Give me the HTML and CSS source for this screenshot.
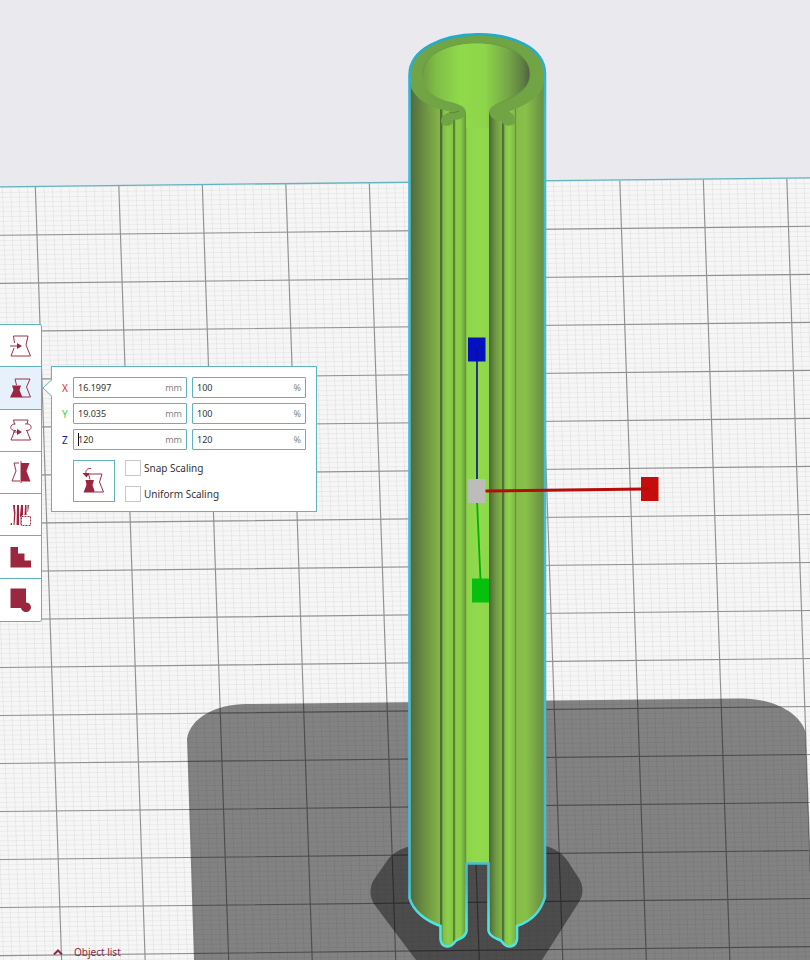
FILE: index.html
```html
<!DOCTYPE html>
<html lang="en">
<head>
<meta charset="utf-8">
<title>Scale model</title>
<link rel="stylesheet" href="styles.css">
</head>
<body>
<main class="workspace">
  <svg class="scene" viewBox="0 0 810 960" preserveAspectRatio="xMidYMid slice" aria-hidden="true">
    <defs>
      <pattern id="minor" width="8.35" height="4.8" patternUnits="userSpaceOnUse" patternTransform="matrix(1 -0.0111 0.034 1 35.3 186.9)">
        <path d="M0 0H8.35M0 0V4.8" stroke="#dedede" stroke-width="1.1" fill="none"/>
      </pattern>
      <linearGradient id="body" gradientUnits="userSpaceOnUse" x1="409" y1="0" x2="545" y2="0">
        <stop offset="0.015" stop-color="#536b3b"/>
        <stop offset="0.06" stop-color="#5f7c40"/>
        <stop offset="0.16" stop-color="#76a043"/>
        <stop offset="0.226" stop-color="#83b548"/>
        <stop offset="0.23" stop-color="#4c7131"/>
        <stop offset="0.24" stop-color="#4c7131"/>
        <stop offset="0.25" stop-color="#80bd46"/>
        <stop offset="0.285" stop-color="#8dcf4b"/>
        <stop offset="0.322" stop-color="#86c648"/>
        <stop offset="0.326" stop-color="#568331"/>
        <stop offset="0.334" stop-color="#568331"/>
        <stop offset="0.344" stop-color="#8ccf4b"/>
        <stop offset="0.38" stop-color="#8acb4a"/>
        <stop offset="0.408" stop-color="#70a53f"/>
        <stop offset="0.418" stop-color="#5f9138"/>
        <stop offset="0.424" stop-color="#8dd54a"/>
        <stop offset="0.5" stop-color="#90da4b"/>
        <stop offset="0.586" stop-color="#8ed74b"/>
        <stop offset="0.59" stop-color="#4d6838"/>
        <stop offset="0.64" stop-color="#6f9b42"/>
        <stop offset="0.68" stop-color="#80b346"/>
        <stop offset="0.684" stop-color="#4b6b35"/>
        <stop offset="0.694" stop-color="#4f7235"/>
        <stop offset="0.706" stop-color="#83c348"/>
        <stop offset="0.74" stop-color="#90d34d"/>
        <stop offset="0.776" stop-color="#7eb946"/>
        <stop offset="0.782" stop-color="#63903a"/>
        <stop offset="0.792" stop-color="#86bd49"/>
        <stop offset="0.86" stop-color="#88c049"/>
        <stop offset="0.95" stop-color="#729c43"/>
        <stop offset="1" stop-color="#638f49"/>
      </linearGradient>
      <linearGradient id="bore" gradientUnits="userSpaceOnUse" x1="422" y1="0" x2="530" y2="0">
        <stop offset="0" stop-color="#6f9d43"/>
        <stop offset="0.12" stop-color="#7fbb47"/>
        <stop offset="0.35" stop-color="#8fda4a"/>
        <stop offset="0.58" stop-color="#8dd54a"/>
        <stop offset="0.8" stop-color="#75a646"/>
        <stop offset="0.93" stop-color="#5f8042"/>
        <stop offset="1" stop-color="#505e41"/>
      </linearGradient>
      <linearGradient id="edge" gradientUnits="userSpaceOnUse" x1="0" y1="35" x2="0" y2="947">
        <stop offset="0" stop-color="#22a9cb"/>
        <stop offset="0.1" stop-color="#48bad0"/>
        <stop offset="0.93" stop-color="#48bcd2"/>
        <stop offset="0.97" stop-color="#4ce6e6"/>
      </linearGradient>
    </defs>
    <rect width="810" height="960" fill="#eae9ee"/>
    <path d="M0 187L810 178V960H0Z" fill="#f6f6f6"/>
    <path d="M0 187L810 178V960H0Z" fill="url(#minor)"/>
    <g transform="matrix(1 -0.0111 0.034 1 35.3 186.9)" fill="none" stroke="#909090" stroke-width="1.100">
      <path d="M0 0V800M83.500 0V800M167 0V800M250.500 0V800M334 0V800M417.500 0V800M501 0V800M584.500 0V800M668 0V800M751.500 0V800"/>
      <path d="M-80 48H800M-80 96H800M-80 144H800M-80 192H800M-80 240H800M-80 288H800M-80 336H800M-80 384H800M-80 432H800M-80 480H800M-80 528H800M-80 576H800M-80 624H800M-80 672H800M-80 720H800M-80 768H800"/>
    </g>
    <path d="M0 186.8L810 177.8" stroke="#63b3c0" stroke-width="1.300"/>
    <path d="M194 960L187 739C190 718 216 704 246 704L740 698.500C776 698 801 715 805.500 732L810 860V960Z" fill="#000" fill-opacity=".47"/>
    <path d="M416 960L374 904C369 896 370 887 373 881L389 858C397 850 405 847 420 843H536C553 847 561 852 567 860L580 880C584 888 583 896 579 902L542 960Z" fill="#000" fill-opacity=".41"/>

    <path d="M409.500 75C409.500 22 545 20 545 74V897C541 911 532 921 517 926V939C516 947 508 949 503 943C501 938 491 940 488.500 931V863.500H466.500V931C465 940 456 938 454 943C449 949 441 947 440.500 939V926C426 921 413 911 409.500 898Z" fill="url(#body)"/>
    <path d="M409.500 75C409.500 22 545 20 545 74L543 87C538 99 522 107 507 112H489H466L453 112C431 109 415 99 411 87Z" fill="#70a444"/>
    <path d="M441 121C441 115 448 112 454 111L466 110C467 117 460 120 453.500 120C454 127 441 128 441 121Z" fill="#70a444"/>
    <path d="M489 110L507 110C512 113 516 117 515.500 121C515 127 502 127 502 121C494 121 489 117 489 110Z" fill="#70a444"/>
    <path d="M422.500 74C423 33 530 32 530 74C530 93 507 99 495 105C490 107 489 110 489 113V128H466V112C465 105 455 103 446 101C432 96 422 88 422.500 74Z" fill="url(#bore)"/>
    <path d="M422.500 74C423 33 530 32 530 74C530 93 507 99 495 105" fill="none" stroke="#679540" stroke-width=".8"/>
    <path d="M449 112L453 113L459 111" fill="none" stroke="#5b8838" stroke-width="1"/>
    <path d="M409.500 75C409.500 22 545 20 545 74V897C541 911 532 921 517 926V939C516 947 508 949 503 943C501 938 491 940 488.500 931V863.500H466.500V931C465 940 456 938 454 943C449 949 441 947 440.500 939V926C426 921 413 911 409.500 898Z" fill="none" stroke="url(#edge)" stroke-width="2.600"/>

    <path d="M477 360V480" stroke="#050b9b" stroke-width="1.600"/>
    <path d="M477 500L480.500 580" stroke="#05ae0b" stroke-width="1.800"/>
    <path d="M484 491L645 489" stroke="#b50c0c" stroke-width="3"/>
    <path d="M468 337.500H485.500V361.500H468Z" fill="#0710be"/>
    <path d="M477 349V361" stroke="#050b9b"/>
    <path d="M468 479H485.500V503H468Z" fill="#bcbcba"/>
    <path d="M472 578.500H489V602.500H472Z" fill="#07c00c"/>
    <path d="M641 477H658.500V501H641Z" fill="#c60d0d"/>
    <path d="M641 489H649" stroke="#b50c0c" stroke-width="3"/>
  </svg>

  <section class="tools">
    <nav class="toolbar" aria-label="Tools">
      <button class="tool" type="button" aria-label="Move">
        <svg class="icon" viewBox="0 0 24 24"><path class="line" d="M5.500 9L4.500 2H19L17 11L21.500 22H2L5 14"/><path class="line" d="M1 12H9"/><path class="solid" d="M8 9L13 12L8 15Z"/></svg>
      </button>
      <button class="tool selected" type="button" aria-label="Scale" aria-pressed="true">
        <svg class="icon" viewBox="0 0 24 24"><path class="line" d="M7.500 9L6 3H21L17.500 11L21.500 21H13"/><path class="solid" d="M3 9.500H12L10.500 14L13.500 21.500H1L4.500 14Z"/></svg>
      </button>
      <button class="tool" type="button" aria-label="Rotate">
        <svg class="icon" viewBox="0 0 24 24"><path class="line" d="M5.500 6L4.500 2H19L18 6M5.500 13L2 22H21.500L18 13M7 12.500C0 13 0 6 6.500 6M4 14H9M16 6C24 5 24 13 17 12.500"/><path class="solid" d="M8 11L13 14L8 17Z"/></svg>
      </button>
      <button class="tool" type="button" aria-label="Mirror">
        <svg class="icon" viewBox="0 0 24 24"><path class="line" d="M10 3H5L7 11L3 21H11M12 1V23"/><path class="solid" d="M12 3H20.500L17.500 11L21.500 21.500H12Z"/></svg>
      </button>
      <button class="tool" type="button" aria-label="Per model settings">
        <svg class="icon" viewBox="0 0 24 24"><path class="solid" d="M4 2H6V5L6.500 10L5.500 22H4.500L5 11ZM8 2H10V22H7.500ZM12 2H14V12L11.500 14V22H11V12ZM16 2H17.500V12H15.500ZM18.500 2H20L19 9H18.500ZM2 20H3V22H1.500Z"/><path class="line dashed" d="M12.500 13.500H21.500V22.500H12.500Z"/></svg>
      </button>
      <button class="tool" type="button" aria-label="Support blocker">
        <svg class="icon" viewBox="0 0 24 24"><path class="solid" d="M1.500 2H9V8.500H15.500V15.500H22V22.500H1.500Z"/></svg>
      </button>
      <button class="tool" type="button" aria-label="Custom supports">
        <svg class="icon" viewBox="0 0 24 24"><path class="solid" d="M1.500 0.500H17V14.500A5 4.800 0 1 1 12 20H1.500Z"/></svg>
      </button>
    </nav>

    <form class="panel">
      <svg class="pointer" viewBox="0 0 10 18" aria-hidden="true"><path d="M10 0.500L1 9L10 17.500" /></svg>
      <div class="row">
        <label class="axis axis-x" for="size-x">X</label>
        <div class="field"><input id="size-x" value="16.1997"><span class="unit">mm</span></div>
        <div class="field"><input aria-label="X percent" value="100"><span class="unit">%</span></div>
      </div>
      <div class="row">
        <label class="axis axis-y" for="size-y">Y</label>
        <div class="field"><input id="size-y" value="19.035"><span class="unit">mm</span></div>
        <div class="field"><input aria-label="Y percent" value="100"><span class="unit">%</span></div>
      </div>
      <div class="row">
        <label class="axis axis-z" for="size-z">Z</label>
        <div class="field editing"><input id="size-z" value="120"><span class="unit">mm</span></div>
        <div class="field"><input aria-label="Z percent" value="120"><span class="unit">%</span></div>
      </div>
      <div class="options">
        <button class="reset" type="button" aria-label="Reset scale">
          <svg class="reset-icon" viewBox="0 0 24 28"><path class="line" d="M8 12.500L6.500 7H20L17.500 15L21.500 25H13M4 7C3 3 6 1 9 1.500"/><path class="solid" d="M0.500 6H7.500L4.500 10.500ZM3.500 13H12L10.500 18L13 25.500H1.500L4.500 18Z"/></svg>
        </button>
        <div class="checks">
          <label class="check"><input type="checkbox">Snap Scaling</label>
          <label class="check"><input type="checkbox">Uniform Scaling</label>
        </div>
      </div>
    </form>
  </section>

  <button class="object-list" type="button">
    <svg class="chevron" viewBox="0 0 10 6" aria-hidden="true"><path d="M1 5.500L5 1.500L9 5.500"/></svg>
    Object list
  </button>
</main>
</body>
</html>
```
FILE: styles.css
```css
* {
  box-sizing: border-box;
}

body {
  margin: 0;
  font: 10px/16px "Noto Sans", sans-serif;
  color: #333;
}

button,
input {
  font: inherit;
  color: inherit;
}

.workspace {
  position: relative;
  display: flex;
  flex-direction: column;
  justify-content: space-between;
  align-items: flex-start;
  min-height: 100vh;
  padding-top: 324px;
  overflow: hidden;
}

.scene {
  position: absolute;
  inset: 0;
  width: 100%;
  height: 100%;
}

.tools {
  position: relative;
  display: flex;
  align-items: flex-start;
  gap: 9px;
}

.toolbar {
  display: grid;
  grid-template-rows: repeat(7, 1fr);
  width: 42px;
  height: 298px;
  border: 1px solid #5fb3bd;
  border-left: 0;
  border-radius: 0 3px 3px 0;
  background: #fff;
  overflow: hidden;
}

.tool {
  display: grid;
  place-items: center;
  padding: 0;
  border: 0;
  border-bottom: 1px solid #5fb3bd;
  background: #fff;
}

.tool:last-child {
  border-bottom: 0;
}

.tool.selected {
  background: #e7f1fb;
}

.icon {
  width: 24px;
  height: 24px;
}

.line {
  fill: none;
  stroke: #9c3148;
  stroke-width: 1;
}

.dashed {
  stroke-dasharray: 2 1;
}

.solid {
  fill: #9a2640;
}

.panel {
  position: relative;
  display: flex;
  flex-direction: column;
  gap: 5px;
  width: 266px;
  margin-top: 42px;
  padding: 10px 10px 9px;
  border: 1px solid #5fb3bd;
  background: #fff;
}

.pointer {
  position: absolute;
  top: 12px;
  left: -10px;
  width: 10px;
  height: 18px;
}

.pointer path {
  fill: #fff;
  stroke: #5fb3bd;
}

.row {
  display: grid;
  grid-template-columns: 6px minmax(0, 1fr) minmax(0, 1fr);
  gap: 5px;
  align-items: center;
}

.axis-x {
  color: #d82a2a;
}

.axis-y {
  color: #35dd35;
}

.axis-z {
  color: #1c1c9c;
}

.field {
  position: relative;
  display: flex;
  align-items: center;
  height: 21px;
  padding: 0 4px;
  border: 1px solid #5fb3bd;
  border-radius: 1px;
  background: #fff;
  font-size: 9px;
}

.field input {
  flex: 1;
  min-width: 0;
  padding: 0;
  border: 0;
  outline: 0;
  background: none;
}

.editing::before {
  content: "";
  position: absolute;
  left: 4px;
  width: 1px;
  height: 13px;
  background: #111;
}

.unit {
  color: #858585;
}

.options {
  display: flex;
  gap: 10px;
  margin: 5px 0 0 11px;
}

.reset {
  display: grid;
  place-items: center;
  width: 42px;
  height: 42px;
  padding: 0;
  border: 1px solid #5fb3bd;
  background: #fff;
}

.reset-icon {
  width: 24px;
  height: 28px;
}

.checks {
  display: flex;
  flex-direction: column;
  justify-content: space-between;
}

.check {
  display: flex;
  align-items: center;
  gap: 3px;
}

.check input {
  appearance: none;
  width: 16px;
  height: 16px;
  margin: 0;
  border: 1px solid #c8c8c8;
  background: #fff;
}

.object-list {
  position: relative;
  display: flex;
  align-items: center;
  gap: 11px;
  margin-left: 53px;
  padding: 0;
  border: 0;
  background: none;
  color: #8c2a42;
}

.chevron {
  width: 10px;
  height: 6px;
}

.chevron path {
  fill: none;
  stroke: #8c2a42;
  stroke-width: 2;
}
```
